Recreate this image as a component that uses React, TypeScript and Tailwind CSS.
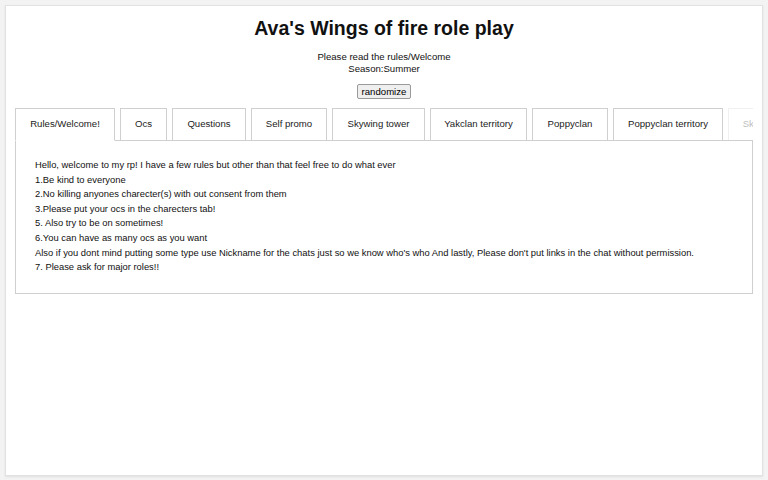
import { useState } from "react";

const tabs = [
  { label: "Rules/Welcome!", w: "w-[100px]" },
  { label: "Ocs", w: "w-[47px]" },
  { label: "Questions", w: "w-[74px]" },
  { label: "Self promo", w: "w-[76px]" },
  { label: "Skywing tower", w: "w-[93px]" },
  { label: "Yakclan territory", w: "w-[97px]" },
  { label: "Poppyclan", w: "w-[76px]" },
  { label: "Poppyclan territory", w: "w-[110px]" },
  { label: "Skywing palace", w: "w-[96px]" },
];

const rules = [
  "Hello, welcome to my rp! I have a few rules but other than that feel free to do what ever",
  "1.Be kind to everyone",
  "2.No killing anyones charecter(s) with out consent from them",
  "3.Please put your ocs in the charecters tab!",
  "5. Also try to be on sometimes!",
  "6.You can have as many ocs as you want",
  "Also if you dont mind putting some type use Nickname for the chats just so we know who's who And lastly, Please don't put links in the chat without permission.",
  "7. Please ask for major roles!!",
];

const App = () => {
  const [active, setActive] = useState(0);

  return (
    <div className="h-[480px] w-[768px] bg-[#f3f3f3] p-[5px] font-['Liberation_Sans',Arial,sans-serif] text-[#111]">
      <div className="flex h-[471px] flex-col border border-[#e2e2e2] bg-white px-[9px] pt-[11px] shadow-[0_1px_2px_rgba(0,0,0,0.08)]">
        <h1 className="text-center text-[19.5px] leading-[23px] font-bold">Ava's Wings of fire role play</h1>
        <p className="mt-[11px] text-center text-[9.6px] leading-[12px]">
          Please read the rules/Welcome
          <br />
          Season:Summer
        </p>
        <div className="mt-[9px] flex justify-center">
          <button
            className="h-[15px] rounded-[2px] border border-[#9a9a9a] bg-[#efefef] px-[4px] text-[9.6px] leading-[13px] text-black"
            onClick={() => setActive(Math.floor(Math.random() * tabs.length))}
          >
            randomize
          </button>
        </div>

        <div className="mt-[9px] flex flex-col">
          <div className="relative z-10 -mb-px flex gap-[5px] overflow-hidden">
            {tabs.map((t, i) => (
              <button
                key={t.label}
                onClick={() => setActive(i)}
                className={
                  t.w +
                  " h-[33px] shrink-0 overflow-hidden border border-[#cfcfcf] text-center text-[9.6px] whitespace-nowrap text-[#222] " +
                  (i === active ? "border-b-white bg-white" : "bg-white") +
                  (i === tabs.length - 1 ? " opacity-30" : "")
                }
              >
                {t.label}
              </button>
            ))}
          </div>
          <div className="border border-[#cfcfcf] px-[19px] pt-[17px] pb-[18px] text-[9.4px] leading-[14.6px] whitespace-nowrap">
            {active === 0 ? (
              rules.map((r) => <div key={r}>{r}</div>)
            ) : (
              <div>{tabs[active].label}</div>
            )}
          </div>
        </div>
      </div>
    </div>
  );
};

export default App;
